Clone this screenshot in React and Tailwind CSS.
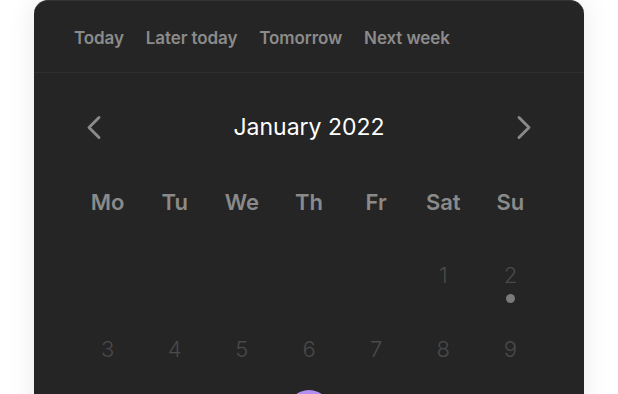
import React from "react";

const quick = ["Today", "Later today", "Tomorrow", "Next week"];
const week = ["Mo", "Tu", "We", "Th", "Fr", "Sat", "Su"];

function Chevron({ dir }) {
  return (
    <svg width="16" height="26" viewBox="0 0 16 26" fill="none">
      <path
        d={dir === "left" ? "M13 3.5 L3 13.5 L13 23.5" : "M3 3.5 L13 13.5 L3 23.5"}
        stroke="#8a8a8a"
        strokeWidth="2.9"
        strokeLinecap="round"
        strokeLinejoin="round"
      />
    </svg>
  );
}

export default function App() {
  const rows = [
    [null, null, null, null, null, 1, 2],
    [3, 4, 5, 6, 7, 8, 9],
    [null, null, null, "sel", null, null, null],
  ];
  return (
    <div
      className="h-[394px] overflow-hidden bg-white flex justify-center"
      style={{ fontFamily: "Inter, 'Noto Sans', sans-serif" }}
    >
      <div className="w-[550px] h-[560px] shrink-0 bg-[#252525] rounded-t-[14px] shadow-[0_0_28px_rgba(0,0,0,0.09)] border-t border-[#333]">
        <div className="h-[72px] pt-[4px] px-10 flex items-center gap-[22px] border-b border-[#2f2f2f]">
          {quick.map((q) => (
            <span key={q} className="text-[17px] font-semibold text-[#8b8b8b] tracking-[-0.1px]">
              {q}
            </span>
          ))}
        </div>
        <div className="px-10">
          <div className="mt-[27px] h-[54px] px-[12px] flex items-center justify-between">
            <Chevron dir="left" />
            <span className="text-[23px] text-white font-normal">January 2022</span>
            <Chevron dir="right" />
          </div>
          <div className="grid grid-cols-7 mt-[11px]">
            {week.map((w) => (
              <div key={w} className="h-[74px] flex items-center justify-center text-[22px] font-semibold text-[#8a8a8a]">
                {w}
              </div>
            ))}
            {rows.flat().map((d, i) => (
              <div key={i} className="h-[74px] flex flex-col items-center">
                {d === "sel" ? (
                  <div className="mt-[3px] w-[44px] h-[44px] rounded-full bg-gradient-to-b from-[#b38ef2] to-[#c58af0]" />
                ) : d !== null ? (
                  <>
                    <span className="mt-[23px] text-[22px] leading-[26px] font-light text-[#4a4a4a]">{d}</span>
                    {d === 2 && <span className="mt-[6px] w-[9px] h-[9px] rounded-full bg-[#7a7a7a]" />}
                  </>
                ) : null}
              </div>
            ))}
          </div>
        </div>
      </div>
    </div>
  );
}
